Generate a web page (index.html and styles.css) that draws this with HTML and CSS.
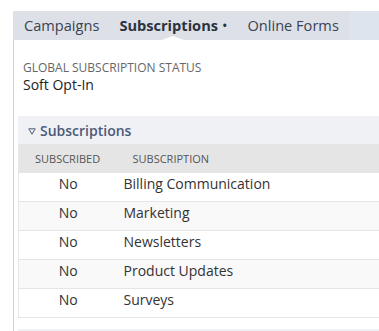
FILE: index.html
```html
<!DOCTYPE html>
<html lang="en">
<head>
  <meta charset="UTF-8" />
  <title>Subscriptions</title>
  <link rel="stylesheet" href="styles.css">
</head>
<body>
  <nav class="tabbar">
    <div class="tabs">
      <span class="tab">Campaigns</span>
      <span class="tab active">Subscriptions<span class="dot">•</span></span>
      <span class="tab">Online Forms</span>
    </div>
  </nav>
  <main class="content">
    <div class="field">
      <div class="field-label">Global Subscription Status</div>
      <div class="field-value">Soft Opt-In</div>
    </div>
    <section class="panel">
      <div class="panel-head">
        <svg class="caret" width="8" height="7" viewBox="0 0 8 7"><path d="M0.8 0.8 H7.2 L4 6.2 Z" fill="none" stroke="#4b5a78" stroke-width="1"/></svg>
        Subscriptions
      </div>
      <table class="subs">
        <thead>
          <tr><th class="col-sub">Subscribed</th><th class="col-name">Subscription</th></tr>
        </thead>
        <tbody>
          <tr><td class="col-sub">No</td><td class="col-name">Billing Communication</td></tr>
          <tr><td class="col-sub">No</td><td class="col-name">Marketing</td></tr>
          <tr><td class="col-sub">No</td><td class="col-name">Newsletters</td></tr>
          <tr><td class="col-sub">No</td><td class="col-name">Product Updates</td></tr>
          <tr><td class="col-sub">No</td><td class="col-name">Surveys</td></tr>
        </tbody>
      </table>
    </section>
    <div class="panel-next"></div>
  </main>
</body>
</html>
```

FILE: styles.css
```css
html, body {
  height: 100%;
  overflow: hidden;
}
body {
  margin: 0;
  font-family: 'Open Sans', sans-serif;
  background: white;
  color: #333;
}
.tabbar {
  margin: 11px 0 0 13px;
  height: 29px;
  background: #dee4ee;
  display: flex;
}
.tabs {
  width: 336px;
  background: #dde0e7;
  display: flex;
  align-items: center;
  padding-left: 11px;
  box-sizing: border-box;
  gap: 20px;
}
.tab {
  font-size: 14.6px;
  color: #3b4352;
  position: relative;
  line-height: 29px;
}
.tab.active {
  font-weight: bold;
  color: #2b3240;
}
.tab.active .dot {
  font-weight: normal;
  margin-left: 4px;
}
.tab.active::after {
  content: "";
  position: absolute;
  left: 43px;
  bottom: 0;
  width: 0;
  height: 0;
  border-left: 11px solid transparent;
  border-right: 11px solid transparent;
  border-bottom: 4px solid white;
}
.content {
  margin-left: 13px;
  border-left: 1px solid #cfcfcf;
  padding: 20px 0 0 4px;
  height: 271px;
  overflow: hidden;
}
.field {
  padding-left: 5px;
  margin-bottom: 22px;
}
.field-label {
  font-size: 12px;
  line-height: 16px;
  text-transform: uppercase;
  color: #666;
}
.field-value {
  font-size: 14px;
  line-height: 18px;
  color: #222;
}
.panel-head {
  background: #f0f1f4;
  height: 28px;
  display: flex;
  align-items: center;
  gap: 4px;
  padding-left: 10px;
  font-size: 14px;
  font-weight: 600;
  color: #4b5a78;
}
.caret {
  margin-top: 2px;
}
.subs {
  width: 100%;
  border-collapse: collapse;
  border-left: 1px solid #e8e8e8;
}
.subs th {
  background: #e5e5e5;
  height: 29px;
  font-size: 11px;
  font-weight: normal;
  text-transform: uppercase;
  color: #555;
  text-align: left;
  padding: 0;
}
.subs th.col-sub {
  width: 99px;
  padding-left: 16px;
  box-sizing: border-box;
}
.subs th.col-name {
  padding-left: 15px;
}
.subs td {
  height: 27px;
  padding: 1px 0 0 0;
  line-height: 19px;
  vertical-align: top;
  font-size: 14px;
  color: #333;
  border-bottom: 1px solid #e6e6e6;
}
.subs td.col-sub {
  text-align: center;
}
.subs td.col-name {
  padding-left: 6px;
}
.subs tbody tr:nth-child(even) td {
  background: #f9f9f9;
}
.panel-next {
  margin-top: 11px;
  height: 10px;
  background: #f0f1f4;
}
```
